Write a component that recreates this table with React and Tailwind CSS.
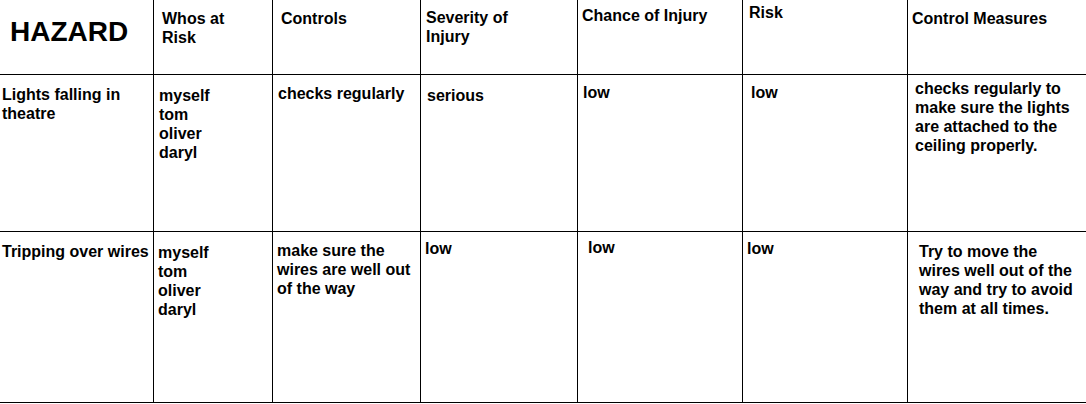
import React from 'react';

const rows = [
  {
    hazard: ['Lights falling in', 'theatre'],
    who: ['myself', 'tom', 'oliver', 'daryl'],
    controls: ['checks regularly'],
    severity: 'serious',
    chance: 'low',
    risk: 'low',
    measures: ['checks regularly to', 'make sure the lights', 'are attached to the', 'ceiling properly.'],
    pads: {
      hazard: 'pt-[10px] pl-[2px]',
      who: 'pt-[11px] pl-[5px]',
      controls: 'pt-[9px] pl-[5px]',
      severity: 'pt-[11px] pl-[6px]',
      chance: 'pt-[8px] pl-[5px]',
      risk: 'pt-[8px] pl-[8px]',
      measures: 'pt-[4px] pl-[7px]',
    },
  },
  {
    hazard: ['Tripping over wires'],
    who: ['myself', 'tom', 'oliver', 'daryl'],
    controls: ['make sure the', 'wires are well out', 'of the way'],
    severity: 'low',
    chance: 'low',
    risk: 'low',
    measures: ['Try to move the', 'wires well out of the', 'way and try to avoid', 'them at all times.'],
    pads: {
      hazard: 'pt-[10px] pl-[2px]',
      who: 'pt-[11px] pl-[4px]',
      controls: 'pt-[9px] pl-[4px]',
      severity: 'pt-[7px] pl-[4px]',
      chance: 'pt-[6px] pl-[10px]',
      risk: 'pt-[7px] pl-[4px]',
      measures: 'pt-[10px] pl-[11px]',
    },
  },
];

function Lines({ items }) {
  return items.map((t) => (
    <span key={t} className="block whitespace-nowrap">{t}</span>
  ));
}

function Cell({ className = '', last, children }) {
  return (
    <div className={`border-b border-black ${last ? '' : 'border-r'} ${className}`}>
      {children}
    </div>
  );
}

export default function App() {
  return (
    <div className="w-[1086px] h-[404px] bg-white overflow-hidden font-['Liberation_Sans',Arial,sans-serif] font-bold text-[16px] leading-[19px] text-black">
      <div className="grid grid-cols-[154px_119px_148px_157px_165px_165px_1fr] grid-rows-[75px_157px_171px]">
        {/* header */}
        <Cell className="pt-[17px] pl-[10px]">
          <span className="text-[28px] leading-[30px]">HAZARD</span>
        </Cell>
        <Cell className="pt-[9px] pl-[8px]">
          <Lines items={['Whos at', 'Risk']} />
        </Cell>
        <Cell className="pt-[9px] pl-[8px]">Controls</Cell>
        <Cell className="pt-[8px] pl-[5px]">
          <Lines items={['Severity of', 'Injury']} />
        </Cell>
        <Cell className="pt-[6px] pl-[4px]">Chance of Injury</Cell>
        <Cell className="pt-[3px] pl-[6px]">Risk</Cell>
        <Cell last className="pt-[9px] pl-[4px]">Control Measures</Cell>

        {rows.map((r) => (
          <React.Fragment key={r.hazard[0]}>
            <Cell className={r.pads.hazard}><Lines items={r.hazard} /></Cell>
            <Cell className={r.pads.who}><Lines items={r.who} /></Cell>
            <Cell className={r.pads.controls}><Lines items={r.controls} /></Cell>
            <Cell className={r.pads.severity}>{r.severity}</Cell>
            <Cell className={r.pads.chance}>{r.chance}</Cell>
            <Cell className={r.pads.risk}>{r.risk}</Cell>
            <Cell last className={r.pads.measures}><Lines items={r.measures} /></Cell>
          </React.Fragment>
        ))}
      </div>
    </div>
  );
}
